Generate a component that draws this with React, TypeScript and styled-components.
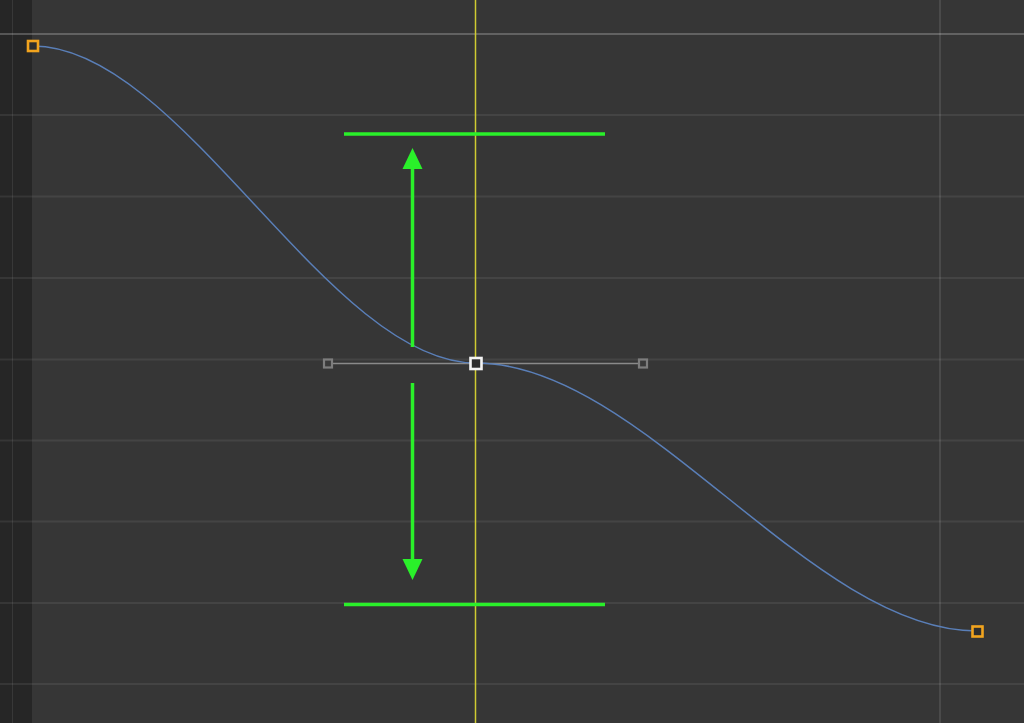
import styled, { createGlobalStyle } from 'styled-components'

const GlobalStyle = createGlobalStyle`
  html, body {
    margin: 0;
    padding: 0;
    background: #363636;
    overflow: hidden;
  }
`

const Editor = styled.div`
  position: relative;
  display: flex;
  width: 1024px;
  height: 723px;
  background: #363636;
  overflow: hidden;
`

const Gutter = styled.div`
  flex: 0 0 32px;
  background: #262626;
  display: flex;
  padding-left: 12px;
  box-sizing: border-box;
`

const GutterRule = styled.div`
  width: 1px;
  background: #383838;
`

const Plot = styled.div`
  flex: 1;
  background: #363636;
`

const Overlay = styled.svg`
  position: absolute;
  inset: 0;
  width: 100%;
  height: 100%;
`

const gridRows = [115, 196.5, 278, 359.5, 440.5, 521.5, 603, 684]

const GREEN = '#2af02a'

export default function App() {
  return (
    <>
      <GlobalStyle />
      <Editor>
        <Gutter>
          <GutterRule />
        </Gutter>
        <Plot />
        <Overlay viewBox="0 0 1024 723">
          {/* grid */}
          {gridRows.map(y => (
            <line key={y} x1={0} x2={1024} y1={y} y2={y} stroke="rgba(255,255,255,0.075)" strokeWidth={2} />
          ))}
          <line x1={0} x2={1024} y1={34} y2={34} stroke="rgba(255,255,255,0.3)" strokeWidth={1.5} />
          <line x1={940} x2={940} y1={0} y2={723} stroke="rgba(255,255,255,0.1)" strokeWidth={2} />

          {/* current time */}
          <line x1={475.5} x2={475.5} y1={0} y2={723} stroke="#cfcb32" strokeWidth={1.5} />

          {/* handles of the middle key */}
          <line x1={328} x2={643} y1={363.5} y2={363.5} stroke="#8a8a8a" strokeWidth={1.5} />

          {/* curve */}
          <path
            d="M33 46 C181 46 328 363 476 363 C643 363 810 631 977 631"
            fill="none"
            stroke="#5a7fb8"
            strokeWidth={1.5}
          />

          <rect x={324} y={359.5} width={8} height={8} fill="#3a3a3a" stroke="#7d7d7d" strokeWidth={2.2} />
          <rect x={639} y={359.5} width={8} height={8} fill="#3a3a3a" stroke="#7d7d7d" strokeWidth={2.2} />

          {/* keys */}
          <rect x={28} y={41} width={10} height={10} fill="#2e2e2e" stroke="#f2a41e" strokeWidth={2.6} />
          <rect x={972.5} y={626.5} width={10} height={10} fill="#2e2e2e" stroke="#f2a41e" strokeWidth={2.6} />
          <rect x={470.5} y={358} width={11} height={11} fill="#2e2e2e" stroke="#f4f4f4" strokeWidth={2.6} />

          {/* annotation */}
          <line x1={344} x2={605} y1={134} y2={134} stroke={GREEN} strokeWidth={3.5} />
          <line x1={344} x2={605} y1={604.5} y2={604.5} stroke={GREEN} strokeWidth={3.5} />
          <line x1={412.5} x2={412.5} y1={347} y2={168} stroke={GREEN} strokeWidth={3.5} />
          <polygon points="412.5,148 402.5,169 422.5,169" fill={GREEN} />
          <line x1={412.5} x2={412.5} y1={383} y2={562} stroke={GREEN} strokeWidth={3.5} />
          <polygon points="412.5,580 402.5,559 422.5,559" fill={GREEN} />
        </Overlay>
      </Editor>
    </>
  )
}
